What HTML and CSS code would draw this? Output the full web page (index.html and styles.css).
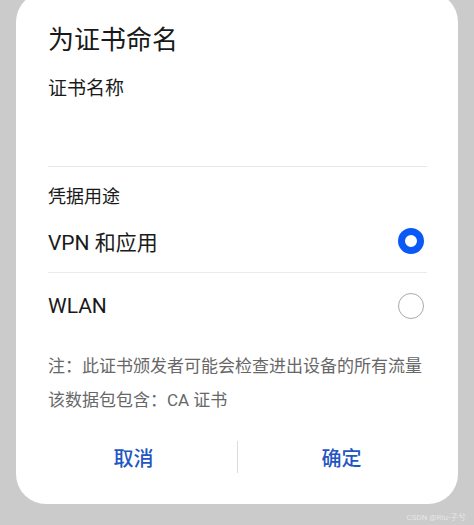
FILE: index.html
```html
<!DOCTYPE html>
<html lang="zh-CN">
<head>
    <meta charset="UTF-8">
    <meta name="viewport" content="width=device-width, initial-scale=1.0">
    <title>为证书命名</title>
    <link rel="stylesheet" href="styles.css">
</head>
<body>
    <section class="dialog">
        <h3 class="dialog-title">为证书命名</h3>
        <label class="field-label" for="cert-name">证书名称</label>
        <input class="field-input" id="cert-name" type="text">
        <div class="group-label">凭据用途</div>
        <div class="option">
            <span>VPN 和应用</span>
            <span class="radio checked"></span>
        </div>
        <div class="option">
            <span>WLAN</span>
            <span class="radio"></span>
        </div>
        <p class="note">
            注：此证书颁发者可能会检查进出设备的所有流量<br>
            该数据包包含：CA 证书
        </p>
        <div class="actions">
            <button class="btn">取消</button>
            <span class="sep"></span>
            <button class="btn">确定</button>
        </div>
    </section>
    <span class="mark">CSDN @Riu-子兮</span>
</body>
</html>
```

FILE: styles.css
```css
body {
    margin: 0;
    height: 525px;
    overflow: hidden;
    background-color: #cbcbcb;
    font-family: Roboto, "Noto Sans CJK SC", sans-serif;
    position: relative;
}
.dialog {
    margin: -8px 16px 0;
    padding: 30px 31px 19px 32px;
    background-color: #fff;
    border-radius: 30px;
    display: flex;
    flex-direction: column;
}
.dialog-title {
    margin: 0;
    font-size: 26px;
    line-height: 36px;
    font-weight: 400;
    color: #191919;
}
.field-label {
    margin-top: 17px;
    font-size: 19px;
    line-height: 28px;
    color: #1a1a1a;
}
.field-input {
    height: 63px;
    border: 0;
    border-bottom: 1px solid #e8e8e8;
    padding: 0;
    outline: none;
    font-size: 19px;
}
.group-label {
    margin-top: 17px;
    font-size: 18px;
    line-height: 26px;
    color: #1a1a1a;
}
.option {
    height: 62px;
    display: flex;
    align-items: center;
    justify-content: space-between;
    padding-right: 3px;
    font-size: 21px;
    color: #1a1a1a;
}
.option:first-of-type {
    margin-top: 2px;
}
.option + .option {
    height: 66px;
    border-top: 1px solid #ebebeb;
}
.radio {
    width: 26px;
    height: 26px;
    box-sizing: border-box;
    border-radius: 50%;
    border: 1.5px solid #a9a9a9;
}
.radio.checked {
    border: 7px solid #0a59f7;
}
.note {
    margin: 10px 0 0;
    font-size: 17px;
    line-height: 34px;
    color: #676767;
}
.actions {
    margin: 12px -18px 0;
    height: 56px;
    display: flex;
    align-items: center;
}
.btn {
    flex: 1;
    border: 0;
    background: none;
    font-family: inherit;
    font-size: 20px;
    font-weight: 500;
    color: #1f56c2;
}
.sep {
    width: 1px;
    height: 32px;
    background-color: #dcdcdc;
}
.mark {
    position: absolute;
    right: 8px;
    bottom: 3px;
    font-size: 8px;
    color: #e6e6e6;
}
```
